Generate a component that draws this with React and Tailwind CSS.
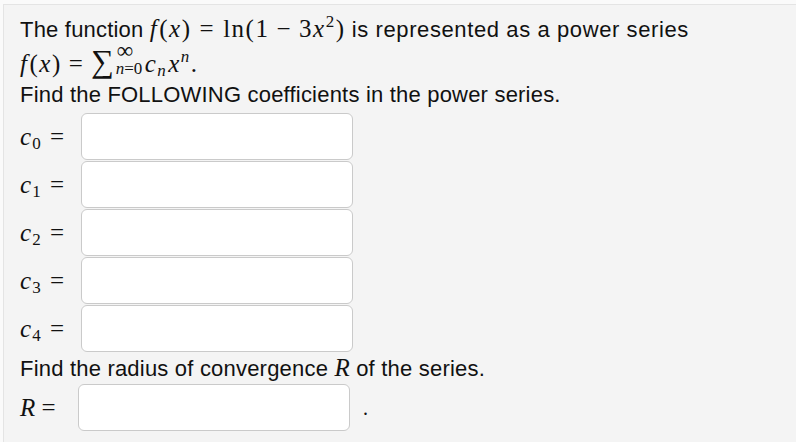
import React from "react";

const sans = { fontFamily: '"Liberation Sans", Arial, sans-serif' };
const serif = { fontFamily: '"Liberation Serif", "Times New Roman", serif' };

const M = ({ children, className = "" }) => (
  <span className={`italic ${className}`} style={serif}>
    {children}
  </span>
);

const R = ({ children, className = "" }) => (
  <span className={className} style={serif}>
    {children}
  </span>
);

const Coefficient = ({ index }) => (
  <div className="flex items-center h-[48px]">
    <div className="w-[61px] shrink-0 text-[25px] leading-none text-[#111]">
      <M className="mr-[1px]">c</M>
      <R className="text-[17px] relative top-[4px]">{index}</R>
      <R className="ml-[9px]">=</R>
    </div>
    <div className="w-[272px] h-[47px] rounded-[6px] border border-[#cacaca] bg-white" />
  </div>
);

export default function App() {
  return (
    <div className="w-[796px] h-[442px] bg-[#fafafa] pt-[4px] pl-[3px]" style={sans}>
      <div className="w-[793px] h-[438px] bg-[#f4f4f4] border-l border-t border-[#e4e4e4] pl-[16px] pt-[6px] text-[22px] tracking-[0.2px] text-[#111]">
        <div className="leading-[34px] h-[34px] whitespace-nowrap">
          The function{" "}
          <span className="text-[25px] tracking-[1.5px]">
            <M className="mr-[1px]">f</M>
            <R>(</R>
            <M>x</M>
            <R>)</R>
            <R className="mx-[8px]">=</R>
            <R>ln(1</R>
            <R className="mx-[7px]">−</R>
            <R>3</R>
            <M>x</M>
            <R className="text-[17px] relative top-[-10px]">2</R>
            <R>)</R>
          </span>{" "}
          <span className="tracking-[0.6px]">is represented as a power series</span>
        </div>
        <div className="leading-[33px] h-[33px] text-[25px] tracking-[1.5px] whitespace-nowrap">
          <M className="mr-[1px]">f</M>
          <R>(</R>
          <M>x</M>
          <R>)</R>
          <R className="mx-[7px]">=</R>
          <R className="text-[32px]">∑</R>
          <span className="relative inline-block w-[29px] h-[1em]">
            <R className="absolute left-[1px] top-[-2px] text-[23px] leading-[12px] tracking-normal">∞</R>
            <span className="absolute left-[0px] top-[16px] text-[17px] leading-[12px] tracking-normal whitespace-nowrap">
              <M>n</M>
              <R>=0</R>
            </span>
          </span>
          <M>c</M>
          <M className="text-[17px] relative top-[4px] mr-[1px]">n</M>
          <M>x</M>
          <M className="text-[17px] relative top-[-10px]">n</M>
          <R>.</R>
        </div>
        <div className="leading-[34px] h-[34px] whitespace-nowrap">
          Find the FOLLOWING coefficients in the power series.
        </div>
        <div className="flex flex-col">
          {[0, 1, 2, 3, 4].map((i) => (
            <Coefficient key={i} index={i} />
          ))}
        </div>
        <div className="leading-[32px] h-[32px] whitespace-nowrap">
          Find the radius of convergence <M className="text-[25px]">R</M> of the series.
        </div>
        <div className="flex items-center">
          <div className="w-[58px] shrink-0 text-[25px] leading-none">
            <M>R</M>
            <R className="ml-[6px]">=</R>
          </div>
          <div className="w-[272px] h-[47px] rounded-[6px] border border-[#cacaca] bg-white" />
          <R className="ml-[13px] text-[20px]">.</R>
        </div>
      </div>
    </div>
  );
}
